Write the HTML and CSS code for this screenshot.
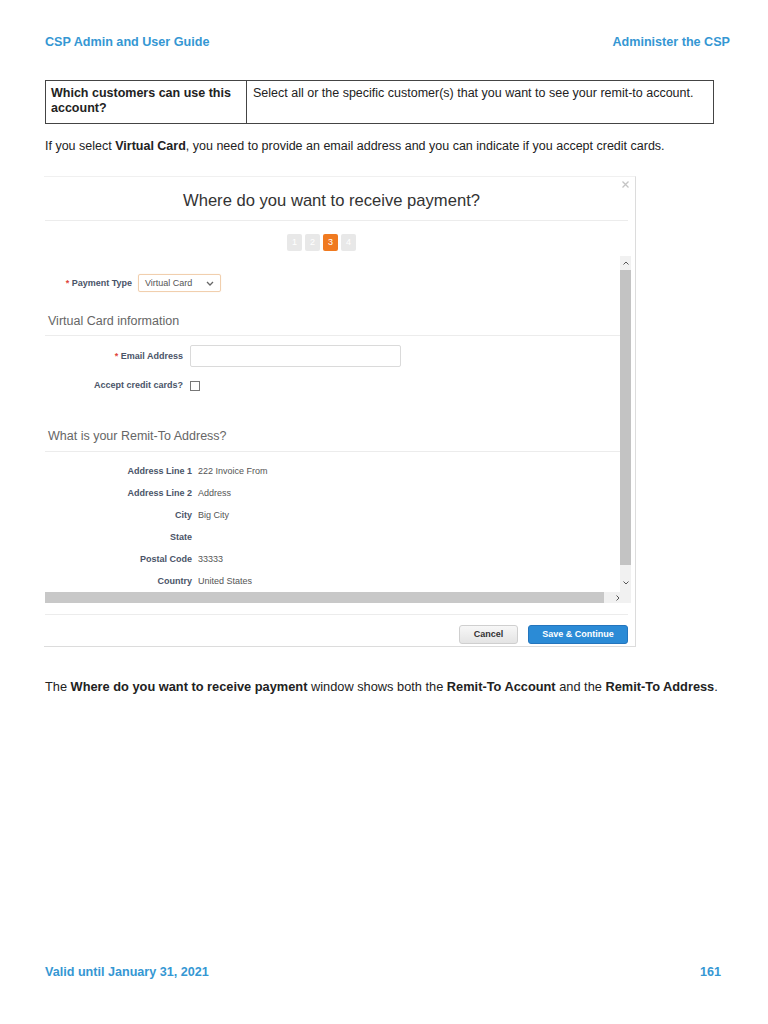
FILE: index.html
```
<!DOCTYPE html>
<html>
<head>
<meta charset="utf-8">
<title>CSP Admin and User Guide</title>
<link rel="stylesheet" href="styles.css">
</head>
<body>
<div class="page">
  <header class="doc-head">
    <span>CSP Admin and User Guide</span>
    <span>Administer the CSP</span>
  </header>

  <table class="info-table">
    <tr>
      <td class="q">Which customers can use this account?</td>
      <td class="a">Select all or the specific customer(s) that you want to see your remit-to account.</td>
    </tr>
  </table>

  <p class="para first">If you select <b>Virtual Card</b>, you need to provide an email address and you can indicate if you accept credit cards.</p>

  <div class="shot">
    <svg class="close" width="7" height="7" viewBox="0 0 7 7"><path d="M0.5 0.5L6.5 6.5M6.5 0.5L0.5 6.5" stroke="#c4c4c4" stroke-width="1.3"/></svg>
    <div class="shot-title">Where do you want to receive payment?</div>
    <div class="steps">
      <span class="step">1</span><span class="step">2</span><span class="step on">3</span><span class="step">4</span>
    </div>
    <div class="scroller">
      <div class="scroll-body">
        <div class="scroll-content">
          <div class="row pay-row">
            <span class="lbl"><i>*</i> Payment Type</span>
            <span class="select">Virtual Card
              <svg width="8" height="5" viewBox="0 0 8 5"><path d="M1 1L4 4L7 1" fill="none" stroke="#666" stroke-width="1.3"/></svg>
            </span>
          </div>
          <div class="sec-head first-sec">Virtual Card information</div>
          <div class="row email-row">
            <span class="lbl"><i>*</i> Email Address</span>
            <span class="input"></span>
          </div>
          <div class="row accept-row">
            <span class="lbl">Accept credit cards?</span>
            <span class="check"></span>
          </div>
          <div class="sec-head second-sec">What is your Remit-To Address?</div>
          <div class="addr">
            <span class="lbl">Address Line 1</span><span class="val">222 Invoice From</span>
            <span class="lbl">Address Line 2</span><span class="val">Address</span>
            <span class="lbl">City</span><span class="val">Big City</span>
            <span class="lbl">State</span><span class="val"></span>
            <span class="lbl">Postal Code</span><span class="val">33333</span>
            <span class="lbl">Country</span><span class="val">United States</span>
          </div>
        </div>
        <div class="vbar">
          <span class="arr up"><svg width="6" height="4" viewBox="0 0 6 4"><path d="M0.5 3.5L3 1L5.5 3.5" fill="none" stroke="#555" stroke-width="1"/></svg></span>
          <div class="vthumb"></div>
          <span class="arr down"><svg width="6" height="4" viewBox="0 0 6 4"><path d="M0.5 0.5L3 3L5.5 0.5" fill="none" stroke="#555" stroke-width="1"/></svg></span>
        </div>
      </div>
      <div class="hbar">
        <div class="hthumb"></div>
        <span class="arr right"><svg width="4" height="6" viewBox="0 0 4 6"><path d="M0.5 0.5L3 3L0.5 5.5" fill="none" stroke="#555" stroke-width="1"/></svg></span>
      </div>
    </div>
    <div class="shot-footer">
      <span class="btn cancel">Cancel</span>
      <span class="btn save">Save &amp; Continue</span>
    </div>
  </div>

  <p class="para second">The <b>Where do you want to receive payment</b> window shows both the <b>Remit-To Account</b> and the <b>Remit-To Address</b>.</p>

  <footer class="doc-foot">
    <span>Valid until January 31, 2021</span>
    <span>161</span>
  </footer>
</div>
</body>
</html>
```

FILE: styles.css
```
html, body {
  margin: 0;
  padding: 0;
  background: #fff;
}
body {
  font-family: "Liberation Sans", Arial, sans-serif;
  color: #222;
}
.page {
  min-height: 1024px;
  box-sizing: border-box;
  padding: 34px 0 44px 45px;
  display: flex;
  flex-direction: column;
}
.doc-head, .doc-foot {
  display: flex;
  justify-content: space-between;
  font-size: 12.6px;
  line-height: 16px;
  font-weight: bold;
  color: #3597d3;
}
.doc-head { width: 685px; }
.doc-foot { width: 676px; margin-top: auto; }

.info-table {
  width: 669px;
  margin-top: 30px;
  border-collapse: collapse;
  border: 1px solid #444;
  font-size: 12.5px;
  line-height: 15px;
}
.info-table td {
  vertical-align: top;
  padding: 5px 6px 7px 6px;
}
.info-table .q {
  width: 189px;
  padding-left: 5px;
  font-weight: bold;
  border-right: 1px solid #444;
}
.para {
  margin: 0;
  font-size: 12.5px;
  line-height: 14px;
  color: #222;
}
.para.first { margin-top: 15px; }
.para.second { margin-top: 33px; font-size: 12.8px; }

/* screenshot */
.shot {
  position: relative;
  width: 592px;
  margin-left: -1px;
  margin-top: 23px;
  box-sizing: border-box;
  border-top: 1px solid #f0f0f0;
  border-right: 1px solid #dcdcdc;
  border-bottom: 1px solid #dcdcdc;
  display: flex;
  flex-direction: column;
}
.close {
  position: absolute;
  top: 4px;
  right: 6px;
}
.shot-title {
  margin: 0 7px 0 1px;
  padding: 14px 10px 9px 0;
  line-height: 20px;
  font-size: 16.6px;
  color: #333;
  text-align: center;
  border-bottom: 1px solid #ececec;
}
.steps {
  display: flex;
  gap: 3px;
  padding: 13px 0 5px 243px;
}
.step {
  width: 15px;
  height: 17px;
  border-radius: 2px;
  background: #e8e8e8;
  color: #fff;
  font-size: 9px;
  line-height: 17px;
  text-align: center;
}
.step.on { background: #f07a20; }

.scroller {
  margin: 0 4px 0 1px;
  display: flex;
  flex-direction: column;
}
.scroll-body {
  display: flex;
  height: 336px;
}
.scroll-content {
  flex: 1;
  overflow: hidden;
  padding-top: 18px;
}
.row {
  display: flex;
  align-items: center;
}
.lbl {
  font-size: 9px;
  font-weight: bold;
  color: #4a5468;
  text-align: right;
  flex: none;
}
.lbl i {
  font-style: normal;
  color: #e0443a;
}
.pay-row { height: 18px; }
.pay-row .lbl { width: 87px; margin-right: 6px; }
.select {
  width: 83px;
  height: 18px;
  box-sizing: border-box;
  border: 1px solid #f1cfae;
  border-radius: 2px;
  display: flex;
  align-items: center;
  justify-content: space-between;
  padding: 0 6px 0 6px;
  font-size: 9px;
  color: #555;
  box-shadow: 0 0 1px #f6dcc4;
}
.sec-head {
  padding: 0 0 6px 3px;
  font-size: 12.5px;
  line-height: 16px;
  color: #666;
  border-bottom: 1px solid #ececec;
}
.first-sec { margin-top: 21px; }
.second-sec { margin-top: 36px; padding-bottom: 7px; }
.email-row { margin-top: 9px; height: 22px; }
.email-row .lbl, .accept-row .lbl { width: 138px; margin-right: 7px; }
.input {
  width: 211px;
  height: 22px;
  box-sizing: border-box;
  border: 1px solid #dadada;
  border-radius: 2px;
}
.accept-row { margin-top: 11px; height: 14px; }
.check {
  width: 10px;
  height: 10px;
  box-sizing: border-box;
  border: 1px solid #777;
  margin-top: 2px;
}
.addr {
  margin-top: 8px;
  display: grid;
  grid-template-columns: 147px 1fr;
  column-gap: 6px;
  grid-auto-rows: 22px;
  align-items: center;
}
.val {
  font-size: 9px;
  color: #555;
}

.vbar {
  width: 11px;
  background: #f1f1f1;
  display: flex;
  flex-direction: column;
}
.arr {
  display: flex;
  align-items: center;
  justify-content: center;
}
.arr.up { height: 14px; }
.vthumb { height: 295px; background: #c3c3c3; }
.arr.down { flex: 1; align-items: flex-end; padding-bottom: 7px; }
.hbar {
  height: 11px;
  display: flex;
  background: #f1f1f1;
}
.hthumb { width: 559px; background: #c8c8c8; }
.arr.right { flex: 1; }

.shot-footer {
  margin: 11px 7px 0 1px;
  padding: 10px 0 2px;
  border-top: 1px solid #ececec;
  display: flex;
  justify-content: flex-end;
  gap: 10px;
}
.btn {
  height: 19px;
  box-sizing: border-box;
  border-radius: 3px;
  font-size: 9px;
  font-weight: bold;
  line-height: 17px;
  text-align: center;
}
.cancel {
  width: 59px;
  color: #333;
  border: 1px solid #cfcfcf;
  background: linear-gradient(#f7f7f7, #e4e4e4);
}
.save {
  width: 100px;
  color: #fff;
  border: 1px solid #2475bd;
  background: #2b8bd6;
}
```
